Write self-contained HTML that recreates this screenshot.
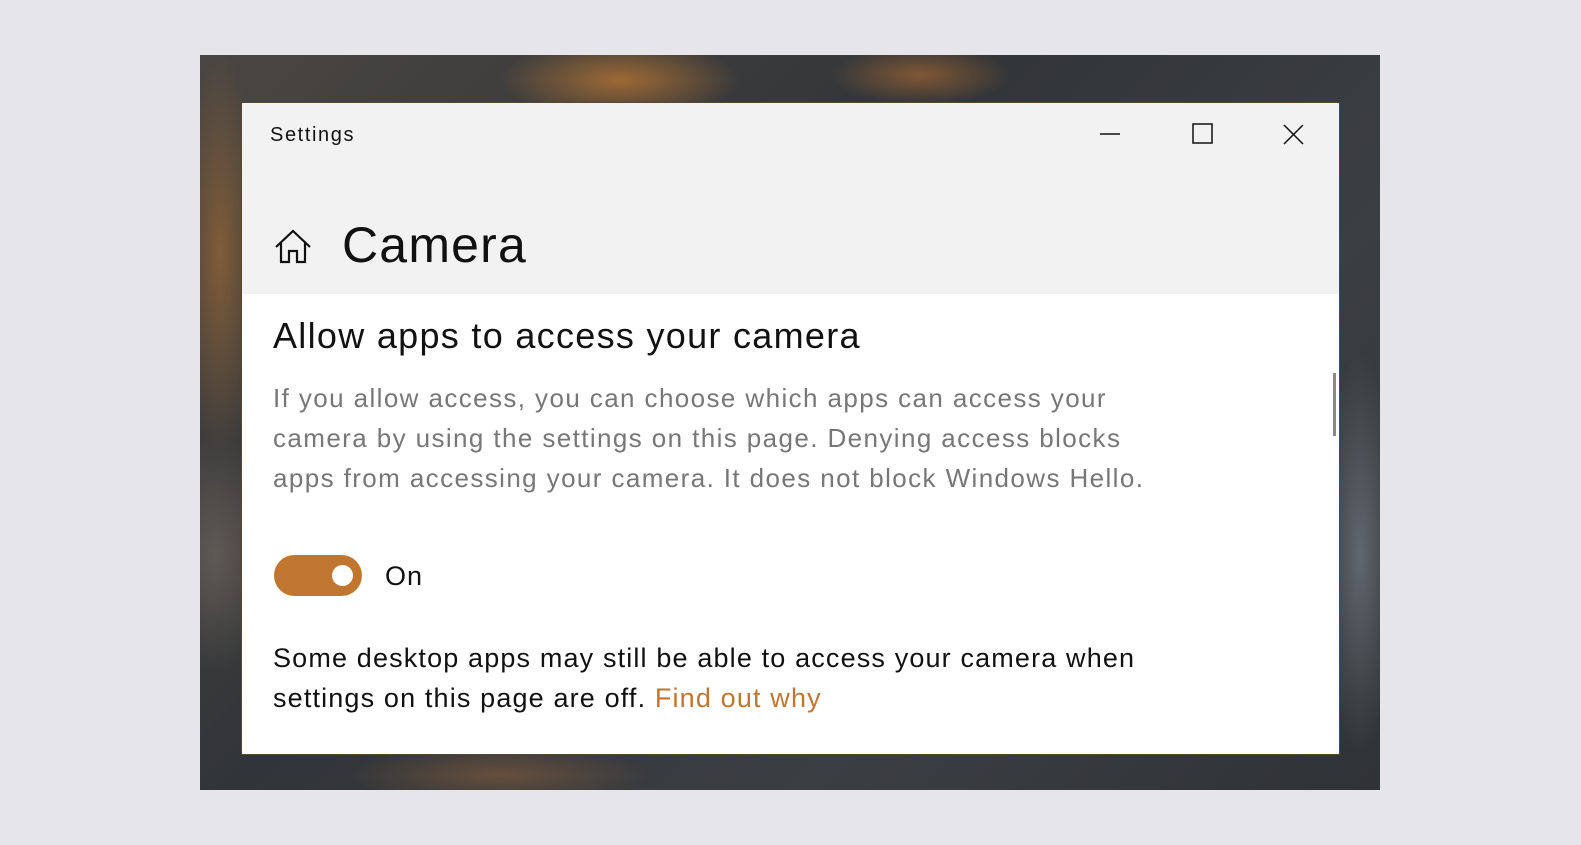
<!DOCTYPE html>
<html><head><meta charset="utf-8"><style>
*{margin:0;padding:0;box-sizing:border-box}
body{width:1581px;height:845px;background:#e6e5ea;position:relative;overflow:hidden;font-family:"Liberation Sans",sans-serif}
.bg{position:absolute;left:200px;top:55px;width:1180px;height:735px;
background:
radial-gradient(ellipse 120px 40px at 420px 25px,rgba(190,120,50,.75),transparent),
radial-gradient(ellipse 90px 30px at 720px 20px,rgba(180,110,50,.6),transparent),
radial-gradient(ellipse 40px 200px at 20px 200px,rgba(170,110,50,.6),transparent),
radial-gradient(ellipse 60px 120px at 15px 500px,rgba(120,110,100,.6),transparent),
radial-gradient(ellipse 150px 30px at 300px 720px,rgba(150,100,60,.5),transparent),
radial-gradient(ellipse 40px 200px at 1160px 500px,rgba(140,150,160,.5),transparent),
linear-gradient(135deg,#4a4642,#323538 40%,#3b3e42 70%,#2f3236);}
.win{position:absolute;left:241px;top:102px;width:1099px;height:653px;background:#fff;border:1px solid #5a4630}
.head{position:absolute;left:0;top:0;width:100%;height:191px;background:#f2f2f2}
.t{position:absolute;color:#111;white-space:nowrap}
</style></head><body>
<div class="bg"></div>
<div class="win">
 <div class="head"></div>
 <div class="t" style="left:28px;top:21px;font-size:20px;letter-spacing:1.6px">Settings</div>
 <svg style="position:absolute;left:858px;top:20px" width="210" height="30">
  <line x1="0" y1="11" x2="20" y2="11" stroke="#111" stroke-width="1.5"/>
  <rect x="93" y="1" width="19" height="19" fill="none" stroke="#111" stroke-width="1.5"/>
  <path d="M184 2 L203 21 M203 2 L184 21" stroke="#111" stroke-width="1.5"/>
 </svg>
 <svg style="position:absolute;left:32px;top:126px" width="38" height="36" viewBox="0 0 38 36">
  <path d="M2 18 L19 2 L36 18 M7 14 V33 H15 V22 H23 V33 H31 V14" fill="none" stroke="#111" stroke-width="2.2" stroke-linejoin="miter"/>
 </svg>
 <div class="t" style="left:100px;top:113px;font-size:50px;letter-spacing:1.2px">Camera</div>
 <div class="t" style="left:31px;top:212px;font-size:36px;letter-spacing:1.3px">Allow apps to access your camera</div>
 <div class="t" style="left:31px;top:275px;font-size:26px;line-height:40px;color:#777;letter-spacing:1.4px">If you allow access, you can choose which apps can access your<br>camera by using the settings on this page. Denying access blocks<br>apps from accessing your camera. It does not block Windows Hello.</div>
 <div style="position:absolute;left:32px;top:452px;width:88px;height:41px;border-radius:21px;background:#c1762f"></div>
 <div style="position:absolute;left:90px;top:462px;width:21px;height:21px;border-radius:50%;background:#fff"></div>
 <div class="t" style="left:143px;top:458px;font-size:27px;letter-spacing:1px">On</div>
 <div class="t" style="left:31px;top:535px;font-size:27px;line-height:40px;letter-spacing:1.15px">Some desktop apps may still be able to access your camera when<br>settings on this page are off. <span style="color:#c1762f">Find out why</span></div>
 <div style="position:absolute;left:1091px;top:270px;width:3px;height:63px;background:#888"></div>
</div>
</body></html>
